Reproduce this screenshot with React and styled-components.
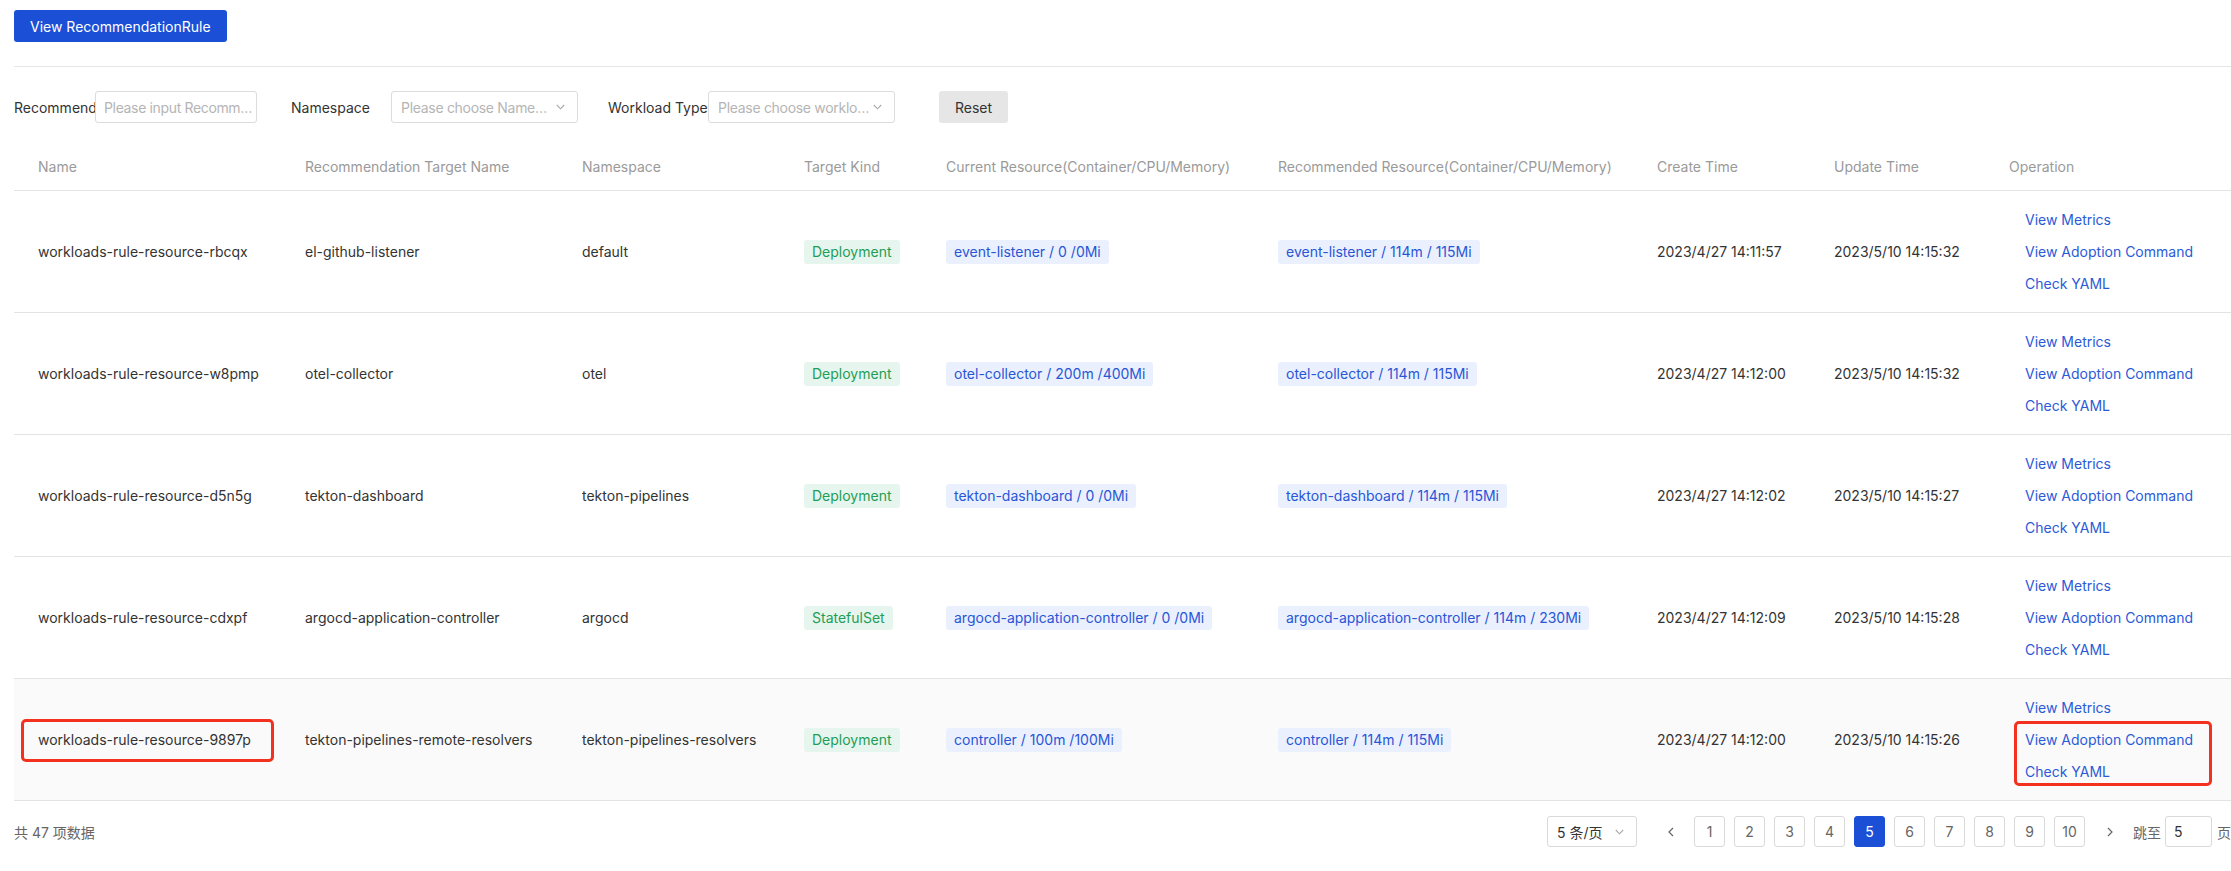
import React from 'react';
import styled, { createGlobalStyle } from 'styled-components';

const GlobalStyle = createGlobalStyle`
  html, body { margin: 0; padding: 0; background: #fff; }
  body {
    font-family: Inter, "Noto Sans CJK SC", sans-serif;
    font-size: 14px;
    color: #333;
    overflow: hidden;
  }
  * { box-sizing: border-box; }
`;

const BLUE = '#1a4fd6';
const LINE = '#e3e3e3';
const RED = '#f2321e';
const COLUMNS = '267px 277px 222px 142px 332px 379px 177px 175px 246px';

const Page = styled.div`
  width: 2231px;
  padding: 10px 0 0 14px;
`;

const PrimaryButton = styled.button`
  height: 32px;
  padding: 0 16px;
  border: none;
  border-radius: 3px;
  background: ${BLUE};
  color: #fff;
  font: inherit;
  cursor: pointer;
`;

const Divider = styled.div`
  height: 1px;
  background: #e6e6e6;
  margin-top: 24px;
`;

const FilterBar = styled.div`
  display: flex;
  align-items: center;
  height: 32px;
  margin-top: 24px;
`;

const FilterItem = styled.div`
  display: flex;
  align-items: center;
  margin-left: ${(p) => p.$offset || 0}px;
`;

const FilterLabel = styled.label`
  width: ${(p) => p.$width}px;
  flex-shrink: 0;
  overflow: hidden;
  white-space: nowrap;
  color: #333;
`;

const TextInput = styled.input`
  width: 162px;
  height: 32px;
  border: 1px solid #dcdcdc;
  border-radius: 3px;
  padding: 0 3px 0 8px;
  font: inherit;
  color: #333;
  outline: none;
  text-overflow: ellipsis;
  letter-spacing: -0.35px;
  &::placeholder { color: #b5b5b5; }
`;

const SelectBox = styled.div`
  width: 187px;
  height: 32px;
  border: 1px solid #dcdcdc;
  border-radius: 3px;
  padding: 0 12px 0 9px;
  display: flex;
  align-items: center;
  justify-content: space-between;
`;

const Placeholder = styled.span`
  color: #b5b5b5;
  white-space: nowrap;
  overflow: hidden;
  text-overflow: ellipsis;
  max-width: 152px;
  letter-spacing: -0.3px;
`;

const GrayButton = styled.button`
  height: 32px;
  padding: 0 16px;
  margin-left: 44px;
  border: none;
  border-radius: 3px;
  background: #e6e6e6;
  color: #333;
  font: inherit;
  cursor: pointer;
`;

const HeaderRow = styled.div`
  display: grid;
  grid-template-columns: ${COLUMNS};
  align-items: center;
  height: 48px;
  margin-top: 20px;
  border-bottom: 1px solid ${LINE};
  color: #9a9a9a;
`;

const BodyRow = styled.div`
  display: grid;
  grid-template-columns: ${COLUMNS};
  align-items: center;
  height: 122px;
  border-bottom: 1px solid ${LINE};
  background: ${(p) => (p.$hover ? '#fafafa' : 'transparent')};
`;

const Cell = styled.div`
  padding-left: 24px;
  white-space: nowrap;
  color: ${(p) => (p.$head ? '#9a9a9a' : '#333')};
`;

const Marked = styled.span`
  position: relative;
  display: inline-block;
  line-height: 22px;
  &::after {
    content: '';
    position: absolute;
    left: -17px;
    right: -23px;
    top: -10px;
    bottom: -11px;
    border: 3px solid ${RED};
    border-radius: 5px;
    pointer-events: none;
  }
`;

const Tag = styled.span`
  display: inline-block;
  height: 24px;
  line-height: 24px;
  padding: 0 8px;
  border-radius: 3px;
  background: ${(p) => (p.$tone === 'green' ? '#e6f6ee' : '#ebf0fe')};
  color: ${(p) => (p.$tone === 'green' ? '#1f9d57' : '#2856d6')};
`;

const OpList = styled.div`
  display: flex;
  flex-direction: column;
  align-items: flex-start;
  gap: 10px;
  padding-left: 16px;
`;

const OpGroup = styled.div`
  position: relative;
  display: flex;
  flex-direction: column;
  align-items: flex-start;
  gap: 10px;
  &::after {
    content: '';
    display: ${(p) => (p.$marked ? 'block' : 'none')};
    position: absolute;
    left: -11px;
    right: -19px;
    top: -8px;
    bottom: -3px;
    border: 3px solid ${RED};
    border-radius: 5px;
    pointer-events: none;
  }
`;

const OpLink = styled.a`
  color: #2a5ad8;
  line-height: 22px;
  text-decoration: none;
  cursor: pointer;
`;

const Footer = styled.div`
  display: flex;
  align-items: center;
  justify-content: space-between;
  height: 31px;
  margin-top: 15px;
`;

const Total = styled.span`
  color: #666;
`;

const Pager = styled.div`
  display: flex;
  align-items: center;
`;

const PageSize = styled.div`
  width: 90px;
  height: 31px;
  border: 1px solid #d9d9d9;
  border-radius: 3px;
  padding: 0 12px 0 9px;
  display: flex;
  align-items: center;
  justify-content: space-between;
  color: #333;
`;

const PageBtn = styled.div`
  width: 31px;
  height: 31px;
  margin-left: ${(p) => (p.$gap ?? 9)}px;
  border: 1px solid ${(p) => (p.$active ? BLUE : p.$plain ? 'transparent' : '#d9d9d9')};
  border-radius: 3px;
  background: ${(p) => (p.$active ? BLUE : '#fff')};
  color: ${(p) => (p.$active ? '#fff' : '#666')};
  display: flex;
  align-items: center;
  justify-content: center;
`;

const PagerText = styled.span`
  color: #666;
  margin-left: ${(p) => p.$gap}px;
`;

const JumpInput = styled.div`
  width: 47px;
  height: 31px;
  margin-left: 4px;
  border: 1px solid #d9d9d9;
  border-radius: 3px;
  padding-left: 8px;
  display: flex;
  align-items: center;
  color: #333;
`;

const ChevronDown = () => (
  <svg width="9" height="6" viewBox="0 0 9 6" fill="none">
    <polyline points="0.8,1 4.5,4.8 8.2,1" stroke="#a8a8a8" strokeWidth="1.1" />
  </svg>
);

const ChevronLeft = () => (
  <svg width="6" height="10" viewBox="0 0 6 10" fill="none">
    <polyline points="5,1 1,5 5,9" stroke="#666" strokeWidth="1.2" />
  </svg>
);

const ChevronRight = () => (
  <svg width="6" height="10" viewBox="0 0 6 10" fill="none">
    <polyline points="1,1 5,5 1,9" stroke="#666" strokeWidth="1.2" />
  </svg>
);

const headers = [
  'Name',
  'Recommendation Target Name',
  'Namespace',
  'Target Kind',
  'Current Resource(Container/CPU/Memory)',
  'Recommended Resource(Container/CPU/Memory)',
  'Create Time',
  'Update Time',
  'Operation',
];

const rows = [
  ['workloads-rule-resource-rbcqx', 'el-github-listener', 'default', 'Deployment', 'event-listener / 0 /0Mi', 'event-listener / 114m / 115Mi', '2023/4/27 14:11:57', '2023/5/10 14:15:32'],
  ['workloads-rule-resource-w8pmp', 'otel-collector', 'otel', 'Deployment', 'otel-collector / 200m /400Mi', 'otel-collector / 114m / 115Mi', '2023/4/27 14:12:00', '2023/5/10 14:15:32'],
  ['workloads-rule-resource-d5n5g', 'tekton-dashboard', 'tekton-pipelines', 'Deployment', 'tekton-dashboard / 0 /0Mi', 'tekton-dashboard / 114m / 115Mi', '2023/4/27 14:12:02', '2023/5/10 14:15:27'],
  ['workloads-rule-resource-cdxpf', 'argocd-application-controller', 'argocd', 'StatefulSet', 'argocd-application-controller / 0 /0Mi', 'argocd-application-controller / 114m / 230Mi', '2023/4/27 14:12:09', '2023/5/10 14:15:28'],
  ['workloads-rule-resource-9897p', 'tekton-pipelines-remote-resolvers', 'tekton-pipelines-resolvers', 'Deployment', 'controller / 100m /100Mi', 'controller / 114m / 115Mi', '2023/4/27 14:12:00', '2023/5/10 14:15:26'],
];

export default function App() {
  return (
    <>
      <GlobalStyle />
      <Page>
        <PrimaryButton>View RecommendationRule</PrimaryButton>
        <Divider />
        <FilterBar>
          <FilterItem>
            <FilterLabel $width={81}>Recommendation Name</FilterLabel>
            <TextInput placeholder="Please input Recommendation Name" />
          </FilterItem>
          <FilterItem $offset={34}>
            <FilterLabel $width={100}>Namespace</FilterLabel>
            <SelectBox>
              <Placeholder>Please choose Namespace</Placeholder>
              <ChevronDown />
            </SelectBox>
          </FilterItem>
          <FilterItem $offset={30}>
            <FilterLabel $width={100}>Workload Type</FilterLabel>
            <SelectBox>
              <Placeholder>Please choose workload type</Placeholder>
              <ChevronDown />
            </SelectBox>
          </FilterItem>
          <GrayButton>Reset</GrayButton>
        </FilterBar>

        <HeaderRow>
          {headers.map((h) => (
            <Cell key={h} $head>{h}</Cell>
          ))}
        </HeaderRow>
        {rows.map((r, i) => {
          const last = i === rows.length - 1;
          return (
            <BodyRow key={r[0]} $hover={last}>
              <Cell>{last ? <Marked>{r[0]}</Marked> : r[0]}</Cell>
              <Cell>{r[1]}</Cell>
              <Cell>{r[2]}</Cell>
              <Cell><Tag $tone="green">{r[3]}</Tag></Cell>
              <Cell><Tag $tone="blue">{r[4]}</Tag></Cell>
              <Cell><Tag $tone="blue">{r[5]}</Tag></Cell>
              <Cell>{r[6]}</Cell>
              <Cell>{r[7]}</Cell>
              <Cell>
                <OpList>
                  <OpLink>View Metrics</OpLink>
                  <OpGroup $marked={last}>
                    <OpLink>View Adoption Command</OpLink>
                    <OpLink>Check YAML</OpLink>
                  </OpGroup>
                </OpList>
              </Cell>
            </BodyRow>
          );
        })}

        <Footer>
          <Total>共 47 项数据</Total>
          <Pager>
            <PageSize>
              <span>5 条/页</span>
              <ChevronDown />
            </PageSize>
            <PageBtn $plain $gap={18}><ChevronLeft /></PageBtn>
            {[1, 2, 3, 4, 5, 6, 7, 8, 9, 10].map((n) => (
              <PageBtn key={n} $active={n === 5} $gap={n === 1 ? 8 : 9}>{n}</PageBtn>
            ))}
            <PageBtn $plain><ChevronRight /></PageBtn>
            <PagerText $gap={8}>跳至</PagerText>
            <JumpInput>5</JumpInput>
            <PagerText $gap={5}>页</PagerText>
          </Pager>
        </Footer>
      </Page>
    </>
  );
}
